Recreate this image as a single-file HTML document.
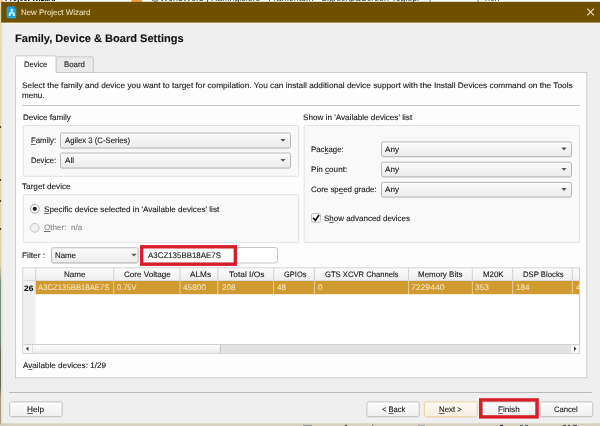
<!DOCTYPE html>
<html><head><meta charset="utf-8"><title>New Project Wizard</title>
<style>
html,body{margin:0;padding:0;}
body{width:600px;height:426px;position:relative;overflow:hidden;background:#efefef;font-family:"Liberation Sans",sans-serif;}
.a{position:absolute;box-sizing:border-box;}
.t{text-rendering:geometricPrecision;-webkit-text-stroke:0.1px currentColor;position:absolute;white-space:nowrap;line-height:12px;transform-origin:0 8.5px;font-family:"Liberation Sans",sans-serif;}
.t u{text-decoration:underline;text-underline-offset:0.8px;text-decoration-thickness:1px;text-decoration-color:rgba(20,20,20,.6);}
.grp{border:1px solid #dcdcdc;background:#f7f7f7;border-radius:1px;}
.combo{border:1px solid #bdbdbd;border-radius:2px;background:linear-gradient(#fbfbfb,#ececec);}
.btn{border:1px solid #c4c4c4;border-radius:2px;background:linear-gradient(#fcfcfc,#f0f0f0);}
.arrow{position:absolute;width:0;height:0;border-left:2.6px solid transparent;border-right:2.6px solid transparent;border-top:2.9px solid #4a4a4a;}
.vsep{position:absolute;width:1px;background:#d4d4d4;}
#txt{position:absolute;left:0;top:0;width:600px;height:426px;filter:blur(0.25px);}
#topclip{position:absolute;left:0;top:0;width:600px;height:1.8px;overflow:hidden;filter:blur(0.25px);}
#topclip span{position:absolute;top:-7.2px;font-size:9px;line-height:10px;white-space:nowrap;transform-origin:0 0;}

</style></head>
<body>
<svg class="a" style="left:0;top:0" width="600" height="426" viewBox="0 0 600 426">
<defs>
<linearGradient id="gc" x1="0" y1="0" x2="0" y2="1"><stop offset="0" stop-color="#fcfcfc"/><stop offset="1" stop-color="#ebebeb"/></linearGradient>
<linearGradient id="gb" x1="0" y1="0" x2="0" y2="1"><stop offset="0" stop-color="#fdfdfd"/><stop offset="1" stop-color="#f0f0f0"/></linearGradient>
<linearGradient id="gn" x1="0" y1="0" x2="0" y2="1"><stop offset="0" stop-color="#fefaf2"/><stop offset="1" stop-color="#f6efe1"/></linearGradient>
<linearGradient id="gh" x1="0" y1="0" x2="0" y2="1"><stop offset="0" stop-color="#fcfcfc"/><stop offset="1" stop-color="#eeeeee"/></linearGradient>
<linearGradient id="gl" x1="0" y1="0" x2="0" y2="1"><stop offset="0" stop-color="#e6d9ae"/><stop offset="0.62" stop-color="#dbd1ab"/><stop offset="0.66" stop-color="#7b9187"/><stop offset="0.8" stop-color="#74897f"/><stop offset="0.83" stop-color="#66665a"/><stop offset="0.91" stop-color="#6b6b5a"/><stop offset="0.93" stop-color="#a59c80"/><stop offset="1" stop-color="#a59c80"/></linearGradient>
</defs>
<rect x="0" y="0" width="600" height="426" fill="#efefef" />
<rect x="0" y="0" width="600" height="2" fill="#ffffff" />
<rect x="131.5" y="0" width="10.5" height="2" fill="#f0a030" />
<rect x="0" y="0" width="3" height="2" fill="#e8d9a4" />
<rect x="0" y="1.8" width="1.2" height="424.2" fill="url(#gl)" />
<rect x="1.2" y="23" width="1.2" height="401" fill="#e8e1c9" />
<rect x="0" y="126" width="1.1" height="2" fill="#4a4030" />
<rect x="0" y="179" width="1.1" height="2" fill="#4a4030" />
<rect x="0" y="200" width="1.1" height="2" fill="#4a4030" />
<rect x="0" y="228" width="1.1" height="2" fill="#4a4030" />
<rect x="1.15" y="1.8" width="598.85" height="20.95" fill="#6f5000" />
<rect x="1.15" y="22.75" width="598.85" height="1.2" fill="#fdf4e0" />
<rect x="7.1" y="6.6" width="9.1" height="11.3" fill="#1ba2e3" rx="1" />
<path d="M7.1 7.6v9.3q0 1 1 1h7.1" fill="none" stroke="#27b7d6" stroke-width="0.7" />
<path d="M13.6 6.8l2.4 2.4v-1.4q0-1-1-1z" fill="#14709a" />
<circle cx="11.8" cy="10.1" r="1.25" fill="#e3f7ff"/>
<path d="M11.8 10.6v2.2M9.7 15.3v-0.9q0-1.6 2.1-1.6q2.1 0 2.1 1.6v0.9" fill="none" stroke="#dff5ff" stroke-width="1.5" stroke-linecap="round"/>
<circle cx="9.7" cy="15" r="1.1" fill="#dff5ff"/><circle cx="13.9" cy="15" r="1.1" fill="#dff5ff"/>
<path d="M587.3 8.6l6.6 6.8M593.9 8.6l-6.6 6.8" fill="none" stroke="#efe4c4" stroke-width="1.1" />
<rect x="15.5" y="72.5" width="571.3" height="305.3" fill="#fdfdfd" stroke="#cdcdcd" stroke-width="1" />
<path d="M56 72.5V58.3q0 -1.5 1.5 -1.5H91.8q1.5 0 1.5 1.5V72.5z" fill="#e9e9e9" stroke="#c9c9c9" stroke-width="1" />
<path d="M15.5 73.2V57.3q0 -1.5 1.5 -1.5H54.5q1.5 0 1.5 1.5V73.2" fill="#fdfdfd" stroke="#cdcdcd" stroke-width="1" />
<rect x="16" y="72" width="39.5" height="1.5" fill="#fdfdfd" />
<line x1="22" y1="105.5" x2="579.8" y2="105.5" stroke="#c6c6c6" stroke-width="1"/>
<rect x="23.3" y="125.5" width="275.3" height="50.8" fill="#f9f9f9" stroke="#e2e2e2" stroke-width="1" rx="1" />
<rect x="304.2" y="125.5" width="275.4" height="117.1" fill="#f9f9f9" stroke="#e2e2e2" stroke-width="1" rx="1" />
<rect x="23.3" y="194.6" width="275.3" height="48" fill="#f9f9f9" stroke="#e2e2e2" stroke-width="1" rx="1" />
<line x1="61.5" y1="148.7" x2="289.5" y2="148.7" stroke="#e2e2e2" stroke-width="1"/>
<rect x="60.5" y="133" width="230" height="15" fill="url(#gc)" stroke="#b9b9b9" stroke-width="1" rx="1.6" />
<path d="M280.4 138.9h5.2L283 141.7z" fill="#555555" />
<line x1="61.5" y1="168.7" x2="289.5" y2="168.7" stroke="#e2e2e2" stroke-width="1"/>
<rect x="60.5" y="153" width="230" height="15" fill="url(#gc)" stroke="#b9b9b9" stroke-width="1" rx="1.6" />
<path d="M280.4 158.9h5.2L283 161.7z" fill="#555555" />
<line x1="382.5" y1="157.2" x2="570.5" y2="157.2" stroke="#e2e2e2" stroke-width="1"/>
<rect x="381.5" y="141.9" width="190" height="14.6" fill="url(#gc)" stroke="#b9b9b9" stroke-width="1" rx="1.6" />
<path d="M561.4 147.6h5.2L564 150.4z" fill="#555555" />
<line x1="382.5" y1="177.5" x2="570.5" y2="177.5" stroke="#e2e2e2" stroke-width="1"/>
<rect x="381.5" y="162.2" width="190" height="14.6" fill="url(#gc)" stroke="#b9b9b9" stroke-width="1" rx="1.6" />
<path d="M561.4 167.9h5.2L564 170.7z" fill="#555555" />
<line x1="382.5" y1="197.7" x2="570.5" y2="197.7" stroke="#e2e2e2" stroke-width="1"/>
<rect x="381.5" y="182.4" width="190" height="14.6" fill="url(#gc)" stroke="#b9b9b9" stroke-width="1" rx="1.6" />
<path d="M561.4 188.1h5.2L564 190.9z" fill="#555555" />
<rect x="311.6" y="213.6" width="8.8" height="8.6" fill="#fdfdfd" stroke="#bcbcbc" stroke-width="1" rx="1.5" />
<path d="M313.1 217.7l2.3 2.7l3.6-5.3" fill="none" stroke="#111" stroke-width="1.7" />
<circle cx="34.8" cy="208.8" r="4.4" fill="#fdfdfd" stroke="#a6a6a6"/><circle cx="34.8" cy="208.8" r="2.1" fill="#1e1e1e"/>
<circle cx="34.8" cy="227.8" r="4.4" fill="#efefef" stroke="#c6c6c6"/>
<line x1="52.6" y1="263.5" x2="137.2" y2="263.5" stroke="#e2e2e2" stroke-width="1"/>
<rect x="51.6" y="247.8" width="86.6" height="15" fill="url(#gc)" stroke="#b9b9b9" stroke-width="1" rx="1.6" />
<path d="M131.4 253.7h5.2L134 256.5z" fill="#555555" />
<rect x="142" y="247.5" width="135.5" height="15.5" fill="#ffffff" stroke="#c4c4c4" stroke-width="1" rx="2.5" />
<rect x="141.7" y="246.8" width="93.6" height="17.4" fill="none" stroke="#d81e2c" stroke-width="3.4" />
<rect x="22.9" y="268" width="556.7" height="85.2" fill="#ffffff" stroke="#c6c6c6" stroke-width="1" />
<rect x="23.4" y="268.5" width="555.7" height="12.3" fill="url(#gh)" />
<line x1="23.4" y1="280.8" x2="579.1" y2="280.8" stroke="#d2d2d2" stroke-width="1"/>
<rect x="23.4" y="281.3" width="12.3" height="63" fill="#efefef" />
<rect x="35.7" y="281" width="543.4" height="13.2" fill="#cf9a30" />
<line x1="35.7" y1="268.5" x2="35.7" y2="280.8" stroke="#d0d0d0" stroke-width="1"/>
<line x1="113.7" y1="268.5" x2="113.7" y2="280.8" stroke="#d0d0d0" stroke-width="1"/>
<line x1="113.7" y1="281" x2="113.7" y2="294.2" stroke="#e8cd93" stroke-width="1"/>
<line x1="180" y1="268.5" x2="180" y2="280.8" stroke="#d0d0d0" stroke-width="1"/>
<line x1="180" y1="281" x2="180" y2="294.2" stroke="#e8cd93" stroke-width="1"/>
<line x1="217.8" y1="268.5" x2="217.8" y2="280.8" stroke="#d0d0d0" stroke-width="1"/>
<line x1="217.8" y1="281" x2="217.8" y2="294.2" stroke="#e8cd93" stroke-width="1"/>
<line x1="273.6" y1="268.5" x2="273.6" y2="280.8" stroke="#d0d0d0" stroke-width="1"/>
<line x1="273.6" y1="281" x2="273.6" y2="294.2" stroke="#e8cd93" stroke-width="1"/>
<line x1="314.4" y1="268.5" x2="314.4" y2="280.8" stroke="#d0d0d0" stroke-width="1"/>
<line x1="314.4" y1="281" x2="314.4" y2="294.2" stroke="#e8cd93" stroke-width="1"/>
<line x1="408.6" y1="268.5" x2="408.6" y2="280.8" stroke="#d0d0d0" stroke-width="1"/>
<line x1="408.6" y1="281" x2="408.6" y2="294.2" stroke="#e8cd93" stroke-width="1"/>
<line x1="472.3" y1="268.5" x2="472.3" y2="280.8" stroke="#d0d0d0" stroke-width="1"/>
<line x1="472.3" y1="281" x2="472.3" y2="294.2" stroke="#e8cd93" stroke-width="1"/>
<line x1="512.7" y1="268.5" x2="512.7" y2="280.8" stroke="#d0d0d0" stroke-width="1"/>
<line x1="512.7" y1="281" x2="512.7" y2="294.2" stroke="#e8cd93" stroke-width="1"/>
<line x1="572.3" y1="268.5" x2="572.3" y2="280.8" stroke="#d0d0d0" stroke-width="1"/>
<line x1="572.3" y1="281" x2="572.3" y2="294.2" stroke="#e8cd93" stroke-width="1"/>
<rect x="23.4" y="344.6" width="555.7" height="8.1" fill="#f0f0f0" />
<line x1="23.4" y1="344.6" x2="579.1" y2="344.6" stroke="#cecece" stroke-width="1"/>
<rect x="32" y="345.1" width="538.5" height="7.6" fill="#e2e2e2" />
<rect x="32" y="345.1" width="188.3" height="7.6" fill="url(#gh)" />
<line x1="220.3" y1="345" x2="220.3" y2="353" stroke="#c4c4c4" stroke-width="1"/>
<line x1="32" y1="345" x2="32" y2="353" stroke="#c8c8c8" stroke-width="1"/>
<line x1="570.5" y1="345" x2="570.5" y2="353" stroke="#c8c8c8" stroke-width="1"/>
<rect x="23.4" y="345.1" width="8.6" height="7.6" fill="#f9f9f9" />
<rect x="570.5" y="345.1" width="8.6" height="7.6" fill="#f9f9f9" />
<path d="M28.4 346.6l-2.4 2.2l2.4 2.2z" fill="#333" />
<path d="M574 346.6l2.4 2.2l-2.4 2.2z" fill="#333" />
<line x1="9" y1="392.5" x2="591.8" y2="392.5" stroke="#b9b9b9" stroke-width="1"/>
<line x1="10.7" y1="417.3" x2="61.2" y2="417.3" stroke="#e4e4e4" stroke-width="1"/>
<rect x="9.7" y="401.9" width="52.5" height="14.7" fill="url(#gb)" stroke="#c2c2c2" stroke-width="1" rx="1.6" />
<line x1="367.9" y1="417.3" x2="418.2" y2="417.3" stroke="#e4e4e4" stroke-width="1"/>
<rect x="366.9" y="401.9" width="52.3" height="14.7" fill="url(#gb)" stroke="#c2c2c2" stroke-width="1" rx="1.6" />
<line x1="425.4" y1="417.3" x2="476.2" y2="417.3" stroke="#e4e4e4" stroke-width="1"/>
<rect x="424.4" y="401.9" width="52.8" height="14.7" fill="url(#gn)" stroke="#efd2a0" stroke-width="1" rx="1.6" />
<line x1="483.5" y1="417.3" x2="534.5" y2="417.3" stroke="#e4e4e4" stroke-width="1"/>
<rect x="482.5" y="401.9" width="53" height="14.7" fill="url(#gb)" stroke="#c2c2c2" stroke-width="1" rx="1.6" />
<line x1="541.2" y1="417.3" x2="591.8" y2="417.3" stroke="#e4e4e4" stroke-width="1"/>
<rect x="540.2" y="401.9" width="52.6" height="14.7" fill="url(#gb)" stroke="#c2c2c2" stroke-width="1" rx="1.6" />
<rect x="480.7" y="399.9" width="56.4" height="17" fill="none" stroke="#d81e2c" stroke-width="3.4" />
<rect x="0" y="423.6" width="600" height="1.1" fill="#c6bc9e" />
<rect x="0" y="424.7" width="600" height="1.3" fill="#d9d3bf" />
<rect x="303" y="424.9" width="9" height="1.1" fill="#888" opacity="0.7"/>
<rect x="345" y="424.9" width="2" height="1.1" fill="#222" opacity="0.9"/>
<rect x="372" y="424.9" width="1.5" height="1.1" fill="#444" opacity="0.7"/>
<rect x="418" y="424.9" width="7" height="1.1" fill="#999" opacity="0.7"/>
<rect x="500" y="424.9" width="3" height="1.1" fill="#111" opacity="0.9"/>
<rect x="520" y="424.9" width="3" height="1.1" fill="#456" opacity="0.8"/>
<rect x="525" y="424.9" width="3" height="1.1" fill="#456" opacity="0.8"/>
<rect x="563" y="424.9" width="3" height="1.1" fill="#333" opacity="0.8"/>
<rect x="568" y="424.9" width="2" height="1.1" fill="#333" opacity="0.8"/>
<rect x="573" y="424.9" width="4" height="1.1" fill="#333" opacity="0.8"/>
</svg>

<div id="topclip"><span style="left:4.5px;font-weight:bold;color:#000;transform:scaleX(.81)">Project Wizard</span><span style="left:151px;color:#333;transform:scaleX(.98)">@WorldWord | Ramrigislere · Framentum · Sig/scrip&amp;Screen Tog.spr</span><span style="left:429px;color:#555">|</span><span style="left:477px;color:#444">[- hcn</span></div>
<div id="txt">
<div class="t" style="left:20.70px;top:7px;font-size:7.9px;color:#e9dcb8;transform:translateY(0.00px) scale(1.0003,1);">New Project Wizard</div>
<div class="t" style="left:15.30px;top:33px;font-size:11px;color:#111;transform:translateY(0.00px) scale(1.0047,1);font-weight:bold;">Family, Device &amp; Board Settings</div>
<div class="t" style="left:23.70px;top:59px;font-size:7.9px;color:#161616;transform:translateY(0.00px) scale(0.9658,1);">Device</div>
<div class="t" style="left:64.30px;top:59px;font-size:7.9px;color:#161616;transform:translateY(0.00px) scale(0.9970,1);">Board</div>
<div class="t" style="left:22.00px;top:80px;font-size:7.9px;color:#161616;transform:translateY(0.00px) scale(1.0492,1);">Select the family and device you want to target for compilation. You can install additional device support with the Install Devices command on the Tools</div>
<div class="t" style="left:22.00px;top:90px;font-size:7.9px;color:#161616;transform:translateY(0.00px) scale(1.0256,1);">menu.</div>
<div class="t" style="left:22.60px;top:112px;font-size:7.9px;color:#161616;transform:translateY(0.00px) scale(1.0187,1);">Device family</div>
<div class="t" style="left:303.30px;top:112px;font-size:7.9px;color:#161616;transform:translateY(0.00px) scale(1.0306,1);">Show in &#x27;Available devices&#x27; list</div>
<div class="t" style="left:30.50px;top:135px;font-size:7.9px;color:#161616;transform:translateY(0.00px) scale(0.9867,1);"><u>F</u>amily:</div>
<div class="t" style="left:30.50px;top:155px;font-size:7.9px;color:#161616;transform:translateY(0.00px) scale(0.9528,1);">Dev<u>i</u>ce:</div>
<div class="t" style="left:64.50px;top:135px;font-size:7.9px;color:#161616;transform:translateY(0.00px) scale(0.9816,1);">Agilex 3 (C-Series)</div>
<div class="t" style="left:64.50px;top:155px;font-size:7.9px;color:#161616;transform:translateY(0.00px) scale(1.0249,1);">All</div>
<div class="t" style="left:22.40px;top:181px;font-size:7.9px;color:#161616;transform:translateY(0.00px) scale(1.0354,1);">Target device</div>
<div class="t" style="left:43.80px;top:204px;font-size:7.9px;color:#161616;transform:translateY(0.00px) scale(1.0280,1);"><u>S</u>pecific device selected in 'Available devices' list</div>
<div class="t" style="left:43.80px;top:222px;font-size:7.9px;color:#8a8a8a;transform:translateY(0.00px) scale(1.0242,1);"><u>O</u>ther:&nbsp; n/a</div>
<div class="t" style="left:311.30px;top:144px;font-size:7.9px;color:#161616;transform:translateY(0.00px) scale(0.9933,1);">Pac<u>k</u>age:</div>
<div class="t" style="left:311.30px;top:164px;font-size:7.9px;color:#161616;transform:translateY(0.00px) scale(1.0306,1);">Pin <u>c</u>ount:</div>
<div class="t" style="left:311.30px;top:184px;font-size:7.9px;color:#161616;transform:translateY(0.00px) scale(1.0050,1);">Core sp<u>e</u>ed grade:</div>
<div class="t" style="left:384.50px;top:144px;font-size:7.9px;color:#161616;transform:translateY(0.00px) scale(1.0287,1);">Any</div>
<div class="t" style="left:384.50px;top:164px;font-size:7.9px;color:#161616;transform:translateY(0.00px) scale(1.0287,1);">Any</div>
<div class="t" style="left:384.50px;top:184px;font-size:7.9px;color:#161616;transform:translateY(0.00px) scale(1.0287,1);">Any</div>
<div class="t" style="left:324.00px;top:213px;font-size:7.9px;color:#161616;transform:translateY(0.00px) scale(1.0105,1);">S<u>h</u>ow advanced devices</div>
<div class="t" style="left:22.40px;top:250px;font-size:7.9px;color:#161616;transform:translateY(0.00px) scale(1.0537,1);">Filter :</div>
<div class="t" style="left:55.00px;top:250px;font-size:7.9px;color:#161616;transform:translateY(0.00px) scale(0.9970,1);">Name</div>
<div class="t" style="left:147.70px;top:250px;font-size:8.1px;color:#161616;transform:translateY(0.00px) scale(0.9772,1);">A3CZ135BB18AE7S</div>
<div class="t" style="left:64.00px;top:269px;font-size:7.9px;color:#161616;transform:translateY(0.00px) scale(1.0208,1);">Name</div>
<div class="t" style="left:124.00px;top:269px;font-size:7.9px;color:#161616;transform:translateY(0.00px) scale(1.0236,1);">Core Voltage</div>
<div class="t" style="left:190.00px;top:269px;font-size:7.9px;color:#161616;transform:translateY(0.00px) scale(1.0411,1);">ALMs</div>
<div class="t" style="left:228.50px;top:269px;font-size:7.9px;color:#161616;transform:translateY(0.00px) scale(1.0652,1);">Total I/Os</div>
<div class="t" style="left:283.50px;top:269px;font-size:7.9px;color:#161616;transform:translateY(0.00px) scale(0.9499,1);">GPIOs</div>
<div class="t" style="left:325.00px;top:269px;font-size:7.9px;color:#161616;transform:translateY(0.00px) scale(0.9674,1);">GTS XCVR Channels</div>
<div class="t" style="left:418.30px;top:269px;font-size:7.9px;color:#161616;transform:translateY(0.00px) scale(1.0127,1);">Memory Bits</div>
<div class="t" style="left:482.70px;top:269px;font-size:7.9px;color:#161616;transform:translateY(0.00px) scale(0.9988,1);">M20K</div>
<div class="t" style="left:522.70px;top:269px;font-size:7.9px;color:#161616;transform:translateY(0.00px) scale(0.9779,1);">DSP Blocks</div>
<div class="t" style="left:24.20px;top:283px;font-size:7.9px;color:#111;transform:translateY(0.00px) scale(1.0705,1);font-weight:bold;">26</div>
<div class="t" style="left:38.00px;top:282px;font-size:8.1px;color:#f3e3bd;transform:translateY(0.00px) scale(0.9571,1);">A3CZ135BB18AE7S</div>
<div class="t" style="left:116.50px;top:282px;font-size:8.1px;color:#f3e3bd;transform:translateY(0.00px) scale(0.9217,1);">0.75V</div>
<div class="t" style="left:183.00px;top:282px;font-size:8.1px;color:#f3e3bd;transform:translateY(0.00px) scale(1.0215,1);">45800</div>
<div class="t" style="left:221.50px;top:282px;font-size:8.1px;color:#f3e3bd;transform:translateY(0.00px) scale(0.9988,1);">208</div>
<div class="t" style="left:276.50px;top:282px;font-size:8.1px;color:#f3e3bd;transform:translateY(0.00px) scale(0.9983,1);">48</div>
<div class="t" style="left:317.50px;top:282px;font-size:8.1px;color:#f3e3bd;transform:translateY(0.00px) scale(0.9965,1);">0</div>
<div class="t" style="left:410.50px;top:282px;font-size:8.1px;color:#f3e3bd;transform:translateY(0.00px) scale(1.0630,1);">7229440</div>
<div class="t" style="left:475.00px;top:282px;font-size:8.1px;color:#f3e3bd;transform:translateY(0.00px) scale(1.0358,1);">353</div>
<div class="t" style="left:515.50px;top:282px;font-size:8.1px;color:#f3e3bd;transform:translateY(0.00px) scale(0.9988,1);">184</div>
<div class="t" style="left:575.50px;top:282px;font-size:8.1px;color:#f3e3bd;transform:translateY(0.00px) scale(0.9965,1);width:3.5px;overflow:hidden;">4</div>
<div class="t" style="left:22.50px;top:360px;font-size:7.9px;color:#161616;transform:translateY(0.00px) scale(1.0299,1);">A<u>v</u>ailable devices: 1/29</div>
<div class="t" style="left:27.00px;top:404px;font-size:7.9px;color:#161616;transform:translateY(0.00px) scale(1.0472,1);"><u>H</u>elp</div>
<div class="t" style="left:381.60px;top:404px;font-size:7.9px;color:#161616;transform:translateY(0.00px) scale(0.9606,1);">&lt; <u>B</u>ack</div>
<div class="t" style="left:439.20px;top:404px;font-size:7.9px;color:#161616;transform:translateY(0.00px) scale(0.9900,1);"><u>N</u>ext &gt;</div>
<div class="t" style="left:497.50px;top:404px;font-size:7.9px;color:#161616;transform:translateY(0.00px) scale(1.0303,1);"><u>F</u>inish</div>
<div class="t" style="left:554.30px;top:404px;font-size:7.9px;color:#161616;transform:translateY(0.00px) scale(0.9690,1);">Cancel</div>
</div>
</body></html>
